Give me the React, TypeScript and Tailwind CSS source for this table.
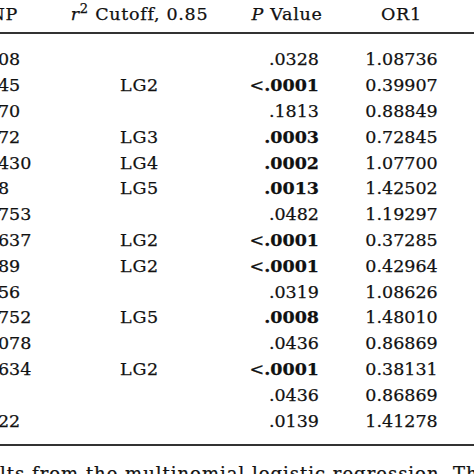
import React from "react";

type Row = { snp: string; lg: string; p: string; pb: boolean; lt: boolean; or: string };

const rows: Row[] = [
  { snp: "08", lg: "", p: ".0328", pb: false, lt: false, or: "1.08736" },
  { snp: "45", lg: "LG2", p: ".0001", pb: true, lt: true, or: "0.39907" },
  { snp: "70", lg: "", p: ".1813", pb: false, lt: false, or: "0.88849" },
  { snp: "72", lg: "LG3", p: ".0003", pb: true, lt: false, or: "0.72845" },
  { snp: "430", lg: "LG4", p: ".0002", pb: true, lt: false, or: "1.07700" },
  { snp: "8", lg: "LG5", p: ".0013", pb: true, lt: false, or: "1.42502" },
  { snp: "753", lg: "", p: ".0482", pb: false, lt: false, or: "1.19297" },
  { snp: "637", lg: "LG2", p: ".0001", pb: true, lt: true, or: "0.37285" },
  { snp: "89", lg: "LG2", p: ".0001", pb: true, lt: true, or: "0.42964" },
  { snp: "56", lg: "", p: ".0319", pb: false, lt: false, or: "1.08626" },
  { snp: "752", lg: "LG5", p: ".0008", pb: true, lt: false, or: "1.48010" },
  { snp: "078", lg: "", p: ".0436", pb: false, lt: false, or: "0.86869" },
  { snp: "634", lg: "LG2", p: ".0001", pb: true, lt: true, or: "0.38131" },
  { snp: "", lg: "", p: ".0436", pb: false, lt: false, or: "0.86869" },
  { snp: "22", lg: "", p: ".0139", pb: false, lt: false, or: "1.41278" },
];

export default function App() {
  return (
    <div className="w-[474px] h-[474px] overflow-hidden bg-white text-[#111] font-['DejaVu_Serif',serif] text-[17.5px] [-webkit-text-stroke:0.25px_#111]">
      {/* header */}
      <div className="flex h-[32px] pt-[1px] leading-[26px] ml-[-64px] whitespace-nowrap">
        <div className="w-[134px] shrink-0 pl-[41px] tracking-[0.6px]">SNP</div>
        <div className="w-[139px] shrink-0 text-center tracking-[0.7px]">
          <i>r</i>
          <sup>2</sup> Cutoff, 0.85
        </div>
        <div className="w-[156px] shrink-0 text-center tracking-[0.7px]">
          <i>P</i> Value
        </div>
        <div className="w-[73px] shrink-0 text-center tracking-[0.8px]">OR1</div>
      </div>
      <div className="h-[2px] bg-[#333]" />
      {/* body */}
      <div className="pt-[13.4px] pb-[9.6px]">
        {rows.map((r, i) => (
          <div key={i} className="flex h-[25.8px] leading-[25.8px] ml-[-64px] whitespace-nowrap">
            <div className="w-[134px] shrink-0">{r.snp ? "rs1234" + r.snp : ""}</div>
            <div className="w-[139px] shrink-0 text-center tracking-[0.7px]">{r.lg}</div>
            <div className="w-[156px] shrink-0 text-right pr-[46px]">
              {r.lt && <span className="font-normal">&lt;</span>}
              {r.pb ? <b className="font-bold">{r.p}</b> : r.p}
            </div>
            <div className="w-[73px] shrink-0 text-center">{r.or}</div>
          </div>
        ))}
      </div>
      <div className="h-[2px] bg-[#333]" />
      <div className="mt-[15px] ml-[-49px] whitespace-nowrap text-[18px] leading-[26px] tracking-[1px]">
        Results from the multinomial logistic regression. The
      </div>
    </div>
  );
}
